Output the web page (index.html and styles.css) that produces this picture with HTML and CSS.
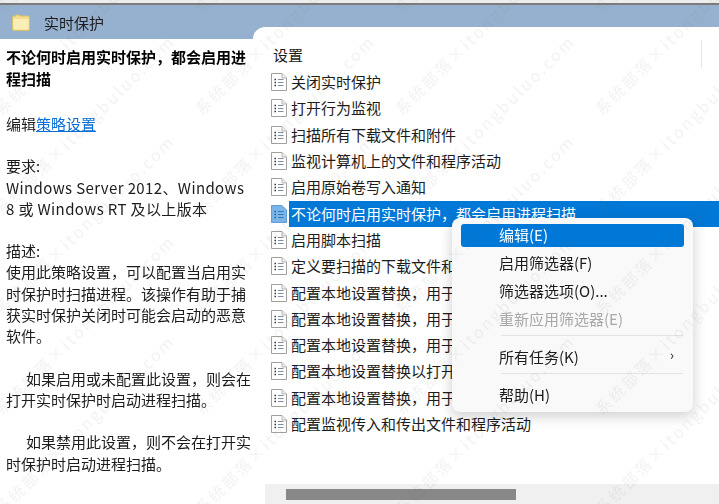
FILE: index.html
```html
<!DOCTYPE html>
<html lang="zh-CN">

<head>
  <meta charset="UTF-8">
  <title>实时保护</title>
  <link rel="stylesheet" href="styles.css">
</head>

<body>
  <svg class="defs" width="0" height="0">
    <symbol id="doc" viewBox="0 0 16 18">
      <path d="M.5.5H11L15.500 5V17.500H.5Z" fill="#fff" stroke="#a0a0a0" />
      <path d="M11 .5V5H15.500" fill="#eee" stroke="#b5b5b5" />
      <path d="M3.500 6.500H5M3.500 9.500H5M3.500 12.500H5" stroke="#333" stroke-width="1.400" />
      <path d="M7 6.500H12.500M7 9.500H12.500M7 12.500H12.500" stroke="#7d8fa8" stroke-width="1.200" />
    </symbol>
    <symbol id="doc-sel" viewBox="0 0 16 18">
      <path d="M.5.5H11L15.500 5V17.500H.5Z" fill="#7db4e6" stroke="#5f9fd8" />
      <path d="M3.500 6.500H5M3.500 9.500H5M3.500 12.500H5" stroke="#1c5f9e" stroke-width="1.400" />
      <path d="M7 6.500H12.500M7 9.500H12.500M7 12.500H12.500" stroke="#2f78bd" stroke-width="1.200" />
    </symbol>
  </svg>

  <div class="window">
    <div class="topline"></div>
    <header class="titlebar">
      <svg class="folder" width="18" height="17" viewBox="0 0 18 17">
        <path d="M.5 3.500Q.5 2 2 2H4V1H7.500V2H16Q17.500 2 17.500 3.500V15Q17.500 16.500 16 16.500H2Q.5 16.500 .5 15Z" fill="#f4dd8c" stroke="#d9bf6a" />
        <path d="M1.500 5H16.500V15.500H1.500Z" fill="#fbeeb4" />
      </svg>
      <span>实时保护</span>
    </header>

    <div class="content">
      <section class="desc">
        <h1>不论何时启用实时保护，都会启用进程扫描</h1>
        <p class="edit">编辑<a href="#">策略设置</a></p>
        <p>要求:<br><span class="latin">Windows Server 2012、Windows<br>8 或 Windows RT 及以上版本</span></p>
        <p>描述:<br>使用此策略设置，可以配置当启用实时保护时扫描进程。该操作有助于捕获实时保护关闭时可能会启动的恶意软件。</p>
        <p class="indent">如果启用或未配置此设置，则会在打开实时保护时启动进程扫描。</p>
        <p class="indent">如果禁用此设置，则不会在打开实时保护时启动进程扫描。</p>
      </section>

      <section class="settings">
        <div class="settings-head">设置</div>
        <ul class="list">
          <li><svg class="doc"><use href="#doc" /></svg><span>关闭实时保护</span></li>
          <li><svg class="doc"><use href="#doc" /></svg><span>打开行为监视</span></li>
          <li><svg class="doc"><use href="#doc" /></svg><span>扫描所有下载文件和附件</span></li>
          <li><svg class="doc"><use href="#doc" /></svg><span>监视计算机上的文件和程序活动</span></li>
          <li><svg class="doc"><use href="#doc" /></svg><span>启用原始卷写入通知</span></li>
          <li class="selected"><svg class="doc"><use href="#doc-sel" /></svg><span>不论何时启用实时保护，都会启用进程扫描</span></li>
          <li><svg class="doc"><use href="#doc" /></svg><span>启用脚本扫描</span></li>
          <li><svg class="doc"><use href="#doc" /></svg><span>定义要扫描的下载文件和附件的最大大小</span></li>
          <li><svg class="doc"><use href="#doc" /></svg><span>配置本地设置替换，用于启用行为监视</span></li>
          <li><svg class="doc"><use href="#doc" /></svg><span>配置本地设置替换，用于扫描所有下载</span></li>
          <li><svg class="doc"><use href="#doc" /></svg><span>配置本地设置替换，用于监视文件活动</span></li>
          <li><svg class="doc"><use href="#doc" /></svg><span>配置本地设置替换以打开实时保护功能</span></li>
          <li><svg class="doc"><use href="#doc" /></svg><span>配置本地设置替换，用于启用进程扫描</span></li>
          <li><svg class="doc"><use href="#doc" /></svg><span>配置监视传入和传出文件和程序活动</span></li>
        </ul>
        <div class="hscroll"><div class="thumb"></div></div>
      </section>
    </div>
  </div>

  <div class="menu">
    <div class="item active">编辑(E)</div>
    <div class="item">启用筛选器(F)</div>
    <div class="item">筛选器选项(O)...</div>
    <div class="item off">重新应用筛选器(E)</div>
    <div class="sep"></div>
    <div class="item">所有任务(K)<span class="arrow">›</span></div>
    <div class="sep"></div>
    <div class="item">帮助(H)</div>
  </div>

  <!-- watermark over everything -->
  <div class="marks">
    <span>系统部落×itongbuluo.com</span><span>系统部落×itongbuluo.com</span><span>系统部落×itongbuluo.com</span><span>系统部落×itongbuluo.com</span>
    <span>系统部落×itongbuluo.com</span><span>系统部落×itongbuluo.com</span><span>系统部落×itongbuluo.com</span><span>系统部落×itongbuluo.com</span>
    <span>系统部落×itongbuluo.com</span><span>系统部落×itongbuluo.com</span><span>系统部落×itongbuluo.com</span><span>系统部落×itongbuluo.com</span>
    <span>系统部落×itongbuluo.com</span><span>系统部落×itongbuluo.com</span><span>系统部落×itongbuluo.com</span><span>系统部落×itongbuluo.com</span>
    <span>系统部落×itongbuluo.com</span><span>系统部落×itongbuluo.com</span><span>系统部落×itongbuluo.com</span><span>系统部落×itongbuluo.com</span>
    <span>系统部落×itongbuluo.com</span><span>系统部落×itongbuluo.com</span><span>系统部落×itongbuluo.com</span><span>系统部落×itongbuluo.com</span>
  </div>
</body>

</html>
```

FILE: styles.css
```css
html {
  font-family: "Noto Sans CJK SC", "Liberation Sans", sans-serif;
}

body {
  margin: 0;
  width: 719px;
  height: 504px;
  overflow: hidden;
  position: relative;
  background-color: #fff;
  color: #1c1c1c;
  font-size: 15px;
}

.defs {
  position: absolute;
}

.window {
  height: 504px;
  display: flex;
  flex-direction: column;
  filter: blur(0.3px);
}

.topline {
  height: 3px;
  background-color: #ededed;
  border-bottom: 2px solid #7c7c7c;
  flex: none;
}

.titlebar {
  flex: none;
  height: 34px;
  background-color: #96b1cf;
  display: flex;
  align-items: center;
  padding-left: 12px;
  gap: 14px;
  line-height: 1;
}

.content {
  flex: 1;
  display: flex;
  min-height: 0;
}

.desc {
  width: 253px;
  flex: none;
  box-sizing: border-box;
  padding: 7px 0 0 6px;
  line-height: 21.3px;
}

.desc h1 {
  font-size: 15px;
  line-height: 22px;
  font-weight: 700;
  color: #000;
  margin: 0 6px 23px 0;
}

.desc p {
  margin: 0 0 21px 0;
}

.desc a {
  color: #0a6fd8;
  text-decoration: underline;
}

.latin {
  letter-spacing: 0.38px;
}

.indent {
  text-indent: 20px;
}

.settings {
  flex: 1;
  margin-top: -12px;
  background-color: #fff;
  border-top-left-radius: 12px;
  display: flex;
  flex-direction: column;
  position: relative;
}

/* faint old scrollbar edge near the top right */
.settings::after {
  content: "";
  position: absolute;
  left: 448px;
  top: 13px;
  width: 1px;
  height: 28px;
  background-color: #e8e8e8;
}

.settings-head {
  padding: 16px 0 0 20px;
  height: 26px;
  line-height: 24px;
}

.list {
  list-style: none;
  margin: 0;
  padding: 0;
  flex: 1;
}

.list li {
  height: 26.3px;
  display: flex;
  align-items: center;
  padding-left: 18px;
  white-space: nowrap;
}

.doc {
  width: 16px;
  height: 18px;
  flex: none;
}

.list li span {
  margin-left: 2px;
  padding-left: 2px;
  flex: 1;
  line-height: 26px;
}

.selected span {
  background-color: #0078d7;
  color: #fff;
}

.hscroll {
  flex: none;
  height: 20px;
  margin-left: 12px;
  background-color: #f0f0f0;
  padding: 5px 0 0 21px;
  box-sizing: border-box;
}

.thumb {
  width: 230px;
  height: 11px;
  background-color: #888;
}

/* context menu */
.menu {
  position: absolute;
  left: 452px;
  top: 218px;
  width: 241px;
  height: 194px;
  box-sizing: border-box;
  padding: 6px 9px;
  background-color: #f9f9f9;
  border-radius: 8px;
  box-shadow: 0 4px 14px rgba(0, 0, 0, 0.2);
  filter: blur(0.3px);
}

.item {
  height: 28px;
  line-height: 26px;
  padding-left: 38px;
  border-radius: 3px;
  color: #1c1c1c;
  position: relative;
}

.item.active {
  height: 23px;
  line-height: 22px;
  margin-bottom: 3px;
  background-color: #0078d7;
  color: #fff;
}

.item.off {
  color: #a8a8a8;
}

.sep {
  height: 1px;
  margin: 1px 1px 8px 40px;
  background-color: #e3e3e3;
}

.arrow {
  position: absolute;
  right: 10px;
  top: -2px;
  font-size: 13px;
}

/* watermark */
.marks {
  position: absolute;
  left: 3px;
  top: -83px;
  display: grid;
  grid-template-columns: repeat(4, 200px);
  grid-auto-rows: 100px;
  pointer-events: none;
}

.marks span {
  align-self: end;
  white-space: nowrap;
  width: 0;
  font-size: 16px;
  line-height: 16px;
  letter-spacing: 2.5px;
  color: rgba(110, 110, 110, 0.09);
  transform: rotate(-45deg);
  transform-origin: left bottom;
}
```
